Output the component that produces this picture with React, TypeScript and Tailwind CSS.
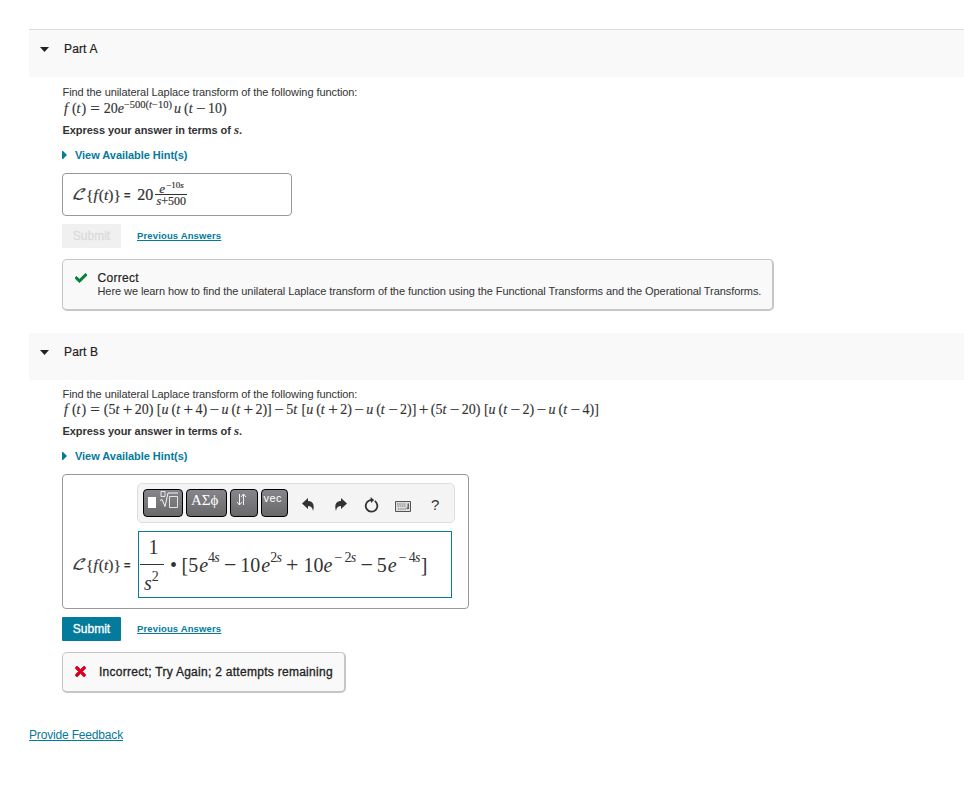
import React from 'react';
import { FaCheck, FaTimes } from 'react-icons/fa';

type Children = { children: React.ReactNode };

function V({ children }: Children) {
  return <i className="pr-px">{children}</i>;
}

function Op({ children }: Children) {
  return <span className="mx-[2.2px] inline-block w-[10px] text-center text-[17px]">{children}</span>;
}

/* a step function call such as u(t - 2) */
function Step({ op, n }: { op: string; n: string }) {
  return (
    <>
      <V>u</V>
      <span className="ml-[2px]">(</span>
      <V>t</V>
      <Op>{op}</Op>
      {n})
    </>
  );
}

function PartHeader({ children, className }: Children & { className: string }) {
  return (
    <div className={`flex bg-[#f9f9f9] pl-[11px] ${className}`}>
      <svg className="mt-[17px] h-[5px] w-[9px]" viewBox="0 0 9 5" fill="#222">
        <path d="M0 0h9L4.5 5z" />
      </svg>
      <h2 className="ml-[15px] mt-[11px] h-4 text-[12px] leading-4 tracking-[0.15px] text-[#222] [-webkit-text-stroke:0.2px]">
        {children}
      </h2>
    </div>
  );
}

function Hints() {
  return (
    <a className="flex h-4 items-center text-[11px] font-bold leading-4 tracking-[-0.04px] text-[#047a9c]">
      <svg className="mr-[8px] h-2 w-[5px]" viewBox="0 0 5 8" fill="currentColor">
        <path d="M0 0h1l4 4-4 4H0z" />
      </svg>
      <span>View Available Hint(s)</span>
    </a>
  );
}

function Express() {
  return (
    <p className="h-4 pl-[0.5px] text-[11px] font-bold leading-4 tracking-[-0.05px] text-[#333]">
      Express your answer in terms of <i className="font-['Liberation_Serif',serif] text-[13px]">s</i>.
    </p>
  );
}

function Laplace() {
  return (
    <span className="flex h-5 items-center whitespace-nowrap font-['Liberation_Serif',serif] text-[15.5px] leading-5 text-[#333] [-webkit-text-stroke:0.2px]">
      <span className="-ml-px inline-block w-[14px] origin-left scale-x-115 font-['DejaVu_Math_TeX_Gyre','DejaVu_Serif','DejaVu_Sans',serif] text-[14px] italic [-webkit-text-stroke:0.3px]">
        ℒ
      </span>
      <span>{'{'}</span>
      <i className="pr-px">f</i>
      <span>(</span>
      <i>t</i>
      <span>){'}'}</span>
      <span className="ml-[3px] font-['Liberation_Sans',sans-serif] text-[11px] font-bold">=</span>
    </span>
  );
}

function Actions({ disabled }: { disabled?: boolean }) {
  return (
    <div className="flex h-6 items-center">
      <button
        className={`h-6 w-[59px] rounded-[1px] text-[12px] [-webkit-text-stroke:0.3px] ${
          disabled ? 'bg-[#f0f0f0] text-[#dcdcdc]' : 'bg-[#047a9c] text-white'
        }`}
      >
        Submit
      </button>
      <a className="ml-4 text-[9.5px] font-bold leading-3 tracking-[0.14px] text-[#047a9c] underline">Previous Answers</a>
    </div>
  );
}

function Key({ children, className }: Children & { className: string }) {
  return (
    <button
      className={`flex h-7 items-start rounded-[4px] border border-black bg-linear-to-b from-[#87858b] to-[#69696b] text-white ${className}`}
    >
      {children}
    </button>
  );
}

function Toolbar() {
  return (
    <div className="flex h-10 w-[318px] items-start rounded-[5px] border border-[#ddd] bg-[#f4f4f4] pl-[5px] pt-[5px]">
      <Key className="w-[40px]">
        <svg className="h-[26px] w-[38px]" viewBox="0 0 38 26" fill="none" stroke="white">
          <path d="M4 7h8v11H4z" fill="white" stroke="none" />
          <path d="M16 10.500l2-1 3 7 3-13.500h10" strokeWidth=".9" />
          <path d="M17 1.500h4v5h-4zM25.500 6.500h8v11h-8z" strokeWidth=".8" />
        </svg>
      </Key>
      <Key className="ml-[3px] w-[41px] pl-[4px] font-['Liberation_Serif',serif] text-[15px] leading-[20px]">ΑΣϕ</Key>
      <Key className="ml-[3px] w-[28px]">
        <svg className="ml-[5px] mt-[3px] h-[14px] w-[11px]" viewBox="0 0 11 14" fill="none" stroke="white" strokeWidth=".9">
          <path d="M3.500 1v11M1 9l2.500 3L6 9M7.500 12V1M5 4l2.500-3L10 4" />
        </svg>
      </Key>
      <Key className="ml-[3px] w-[27px] pl-[1.5px] text-[11px] leading-[16px] tracking-[0.4px]">vec</Key>
      <svg className="ml-[14px] mt-[9px] h-[13px] w-[13px]" viewBox="0 0 13 13" fill="#333">
        <path d="M6 0v3c4.500 0 7 3.500 5 10C10.500 9.500 9 8 6 8v3L0 5.500z" />
      </svg>
      <svg className="ml-[19px] mt-[9px] h-[13px] w-[13px]" viewBox="0 0 13 13" fill="#333">
        <path d="M7 0v3C2.500 3 0 6.500 2 13c.5-3.500 2-5 5-5v3l6-5.500z" />
      </svg>
      <svg className="ml-[17px] mt-[8px] h-[16px] w-[15px]" viewBox="0 0 15 16">
        <path d="M10.800 4a5.800 5.800 0 1 1-6-.3l2.200-.9" fill="none" stroke="#333" strokeWidth="1.800" />
        <path d="M6.500 0l3.700 3L7 6z" fill="#333" />
      </svg>
      <svg className="ml-[16px] mt-[12px] h-[11px] w-[16px]" viewBox="0 0 16 11">
        <path d="M.5.5h15v10H.5z" fill="#ddd" stroke="#555" />
        <path d="M2 3h9M2.500 5h8.500M3 8h8" stroke="#777" strokeDasharray="1.500 .7" />
        <path d="M12.500 2.500h1.500V8h-2.500V6.500h1z" fill="#666" />
      </svg>
      <span className="ml-[20px] mt-[6px] text-[15px] leading-5 text-[#333]">?</span>
    </div>
  );
}

function Exp({ sign, n }: { sign?: boolean; n: string }) {
  return (
    <span className={`-mt-[13px] text-[14px] tracking-[-0.8px] ${sign ? 'ml-[2px]' : ''}`}>
      {sign && <span className="mr-[3px]">−</span>}
      {n}
      <i>s</i>
    </span>
  );
}

const mathRow =
  "flex h-[17px] items-center whitespace-pre font-['Liberation_Serif',serif] text-[14px] leading-[17px] text-[#333] [-webkit-text-stroke:0.15px]";
const feedback = 'mt-[11px] flex rounded-[5px] border border-r-2 border-b-2 border-[#c6c6c6] bg-[#f9f9f9]';

export default function App() {
  return (
    <div className="h-[786px] w-full overflow-hidden bg-white pl-[29px] pt-[29px] font-['Liberation_Sans',sans-serif] text-[11px] text-[#333]">
      <PartHeader className="h-12 border-t border-[#ddd]">Part A</PartHeader>
      <section className="pl-[33px] pt-2">
        <p className="h-[14px] pl-[0.5px] leading-[14px] tracking-[-0.075px]">
          Find the unilateral Laplace transform of the following function:
        </p>
        <div className={`mt-px ${mathRow}`}>
          <i className="mr-[4px] pl-[2px]">f</i>(<V>t</V>)
          <span className="mx-[4px] text-[17px]">=</span>20<i>e</i>
          <span className="-mt-[8px] mr-[2px] text-[10.5px]">
            −500(<i>t</i>−10)
          </span>
          <Step op="−" n="10" />
        </div>
        <div className="mt-[5px]">
          <Express />
        </div>
        <div className="mt-[9px]">
          <Hints />
        </div>
        <div className="mt-[10px] flex h-[43px] w-[230px] items-center rounded-[4px] border border-[#999] pl-[10px]">
          <Laplace />
          <span className="ml-[7px] font-['Liberation_Serif',serif] text-[16px] [-webkit-text-stroke:0.2px]">20</span>
          <span className="ml-[2px] flex w-[32px] flex-col items-center font-['Liberation_Serif',serif] text-[12px] [-webkit-text-stroke:0.2px]">
            <span className="flex h-[12px] w-full items-end border-b border-[#333] pl-[4px] leading-[10px]">
              <i className="text-[13px]">e</i>
              <span className="mb-[4px] ml-px text-[9px]">
                −10<i>s</i>
              </span>
            </span>
            <span className="h-[12px] leading-[13px]">
              <i>s</i>+500
            </span>
          </span>
        </div>
        <div className="mt-2">
          <Actions disabled />
        </div>
        <div className={`h-[52px] w-[712px] ${feedback}`}>
          <FaCheck className="ml-[12px] mt-[12px] text-[12px] text-[#038238]" stroke="currentColor" strokeWidth={40} />
          <div className="ml-[10.5px] mt-[10px] whitespace-nowrap">
            <h3 className="h-[14px] text-[12px] leading-[16px] tracking-[0.3px] text-[#222] [-webkit-text-stroke:0.2px]">Correct</h3>
            <p className="leading-[14px] tracking-[-0.077px]">
              Here we learn how to find the unilateral Laplace transform of the function using the Functional Transforms and the
              Operational Transforms.
            </p>
          </div>
        </div>
      </section>

      <PartHeader className="mt-[22px] h-[47px]">Part B</PartHeader>
      <section className="pl-[33px] pt-[7px]">
        <p className="h-[14px] pl-[0.5px] leading-[14px] tracking-[-0.075px]">
          Find the unilateral Laplace transform of the following function:
        </p>
        <div className={mathRow}>
          <i className="mr-[4px] pl-[2px]">f</i>(<V>t</V>)<span className="mx-[4px] text-[17px]">=</span>(5<V>t</V>
          <Op>+</Op>20) [<Step op="+" n="4" />
          <Op>−</Op>
          <Step op="+" n="2" />]<Op>−</Op>5<V>t</V> [<Step op="+" n="2" />
          <Op>−</Op>
          <Step op="−" n="2" />]<Op>+</Op>(5<V>t</V>
          <Op>−</Op>20) [<Step op="−" n="2" />
          <Op>−</Op>
          <Step op="−" n="4" />]
        </div>
        <div className="mt-[5px]">
          <Express />
        </div>
        <div className="mt-[9px]">
          <Hints />
        </div>
        <div className="mt-[10px] h-[135px] w-[407px] rounded-[4px] border border-[#999] pt-2">
          <div className="pl-[74px]">
            <Toolbar />
          </div>
          <div className="mt-2 flex items-center pl-[10px]">
            <div className="w-[65px]">
              <Laplace />
            </div>
            <div className="flex h-[67px] w-[314px] items-center border border-[#047a9c] pl-px font-['Liberation_Serif',serif] text-[20px] leading-6 text-[#333]">
              <span className="flex w-6 flex-col">
                <span className="h-[32px] border-b border-[#333] pt-[2px] pl-[3px] text-center">1</span>
                <span className="h-[32px] pl-[4px] pt-[6px]">
                  <i>s</i>
                  <sup className="top-[-9px] text-[14px]">2</sup>
                </span>
              </span>
              <span className="ml-[6px] flex items-center whitespace-nowrap">
                <span className="w-[11.5px] text-[20px]">•</span>
                <span>[</span>5<i className="ml-px">e</i>
                <Exp n="4" />
                <span className="ml-[5px] mr-[4px] text-[22px]">−</span>10<i className="ml-px">e</i>
                <Exp n="2" />
                <span className="mx-[5px] text-[22px]">+</span>10<i>e</i>
                <Exp sign n="2" />
                <span className="ml-[5px] mr-[4px] text-[22px]">−</span>5<i className="ml-px">e</i>
                <Exp sign n="4" />
                <span className="ml-px">]</span>
              </span>
            </div>
          </div>
        </div>
        <div className="mt-2">
          <Actions />
        </div>
        <div className={`h-[41px] w-[284px] items-center ${feedback}`}>
          <FaTimes className="ml-[10px] -mt-[2px] text-[15px] text-[#db0020]" stroke="currentColor" strokeWidth={30} />
          <span className="ml-[11px] whitespace-nowrap text-[12px] tracking-[0.28px] text-[#222] [-webkit-text-stroke:0.3px]">
            Incorrect; Try Again; 2 attempts remaining
          </span>
        </div>
      </section>
      <a className="mt-[34px] block h-4 w-fit text-[12px] leading-4 tracking-[-0.17px] text-[#047a9c] underline">Provide Feedback</a>
    </div>
  );
}
